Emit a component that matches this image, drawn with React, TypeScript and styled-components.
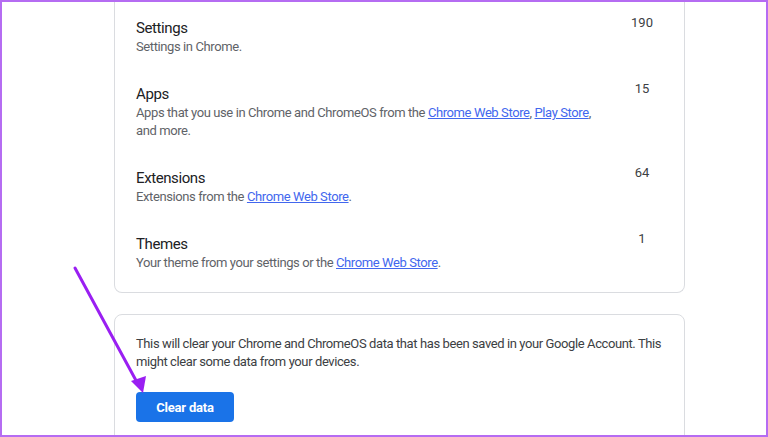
import React from 'react'
import styled, { createGlobalStyle } from 'styled-components'

const GlobalStyle = createGlobalStyle`
  html, body {
    margin: 0;
    padding: 0;
    background: #ffffff;
  }
  body {
    font-family: Roboto, "Liberation Sans", Arial, sans-serif;
  }
`

interface SyncItem {
  title: string;
  count: number;
  description: React.ReactNode;
}

const Frame = styled.div`
  position: relative;
  box-sizing: border-box;
  width: 768px;
  height: 437px;
  border: 2px solid #b56cf2;
  overflow: hidden;
  background: #ffffff;
  padding-left: 112px;
`

const Card = styled.section`
  box-sizing: border-box;
  width: 571px;
  border: 1px solid #dadce0;
  border-radius: 8px;
  background: #ffffff;
`

const ListCard = styled(Card)`
  border-top: 0;
  border-top-left-radius: 0;
  border-top-right-radius: 0;
  padding: 16px 12px 20px 21px;
  display: flex;
  flex-direction: column;
  gap: 28px;
`

const ClearCard = styled(Card)`
  margin-top: 21px;
  padding: 20px 12px 40px 21px;
`

const Row = styled.div`
  display: grid;
  grid-template-columns: 1fr 60px;
`

const Title = styled.div`
  font-size: 15px;
  line-height: 20px;
  letter-spacing: -0.4px;
  color: #202124;
`

const Description = styled.div`
  font-size: 13px;
  line-height: 18px;
  letter-spacing: -0.4px;
  color: #5f6368;
`

const Link = styled.a`
  color: #4267ee;
  text-decoration: underline;
  cursor: pointer;
`

const Count = styled.div`
  font-size: 13px;
  line-height: 18px;
  color: #3c4043;
  text-align: center;
  margin-top: -4px;
`

const Notice = styled.p`
  margin: 0;
  font-size: 13px;
  line-height: 18px;
  letter-spacing: -0.4px;
  color: #3c4043;
`

const ClearButton = styled.button`
  margin-top: 21px;
  width: 98px;
  height: 30px;
  border: 0;
  border-radius: 4px;
  background: #1a73e8;
  color: #ffffff;
  font-family: Roboto, "Liberation Sans", Arial, sans-serif;
  font-size: 13px;
  font-weight: 700;
  letter-spacing: -0.2px;
  cursor: pointer;
`

const Pointer = styled.svg`
  position: absolute;
  top: -2px;
  left: -2px;
  pointer-events: none;
`

const items: SyncItem[] = [
  { title: 'Settings', count: 190, description: 'Settings in Chrome.' },
  {
    title: 'Apps',
    count: 15,
    description: (
      <>
        Apps that you use in Chrome and ChromeOS from the <Link>Chrome Web Store</Link>,{' '}
        <Link>Play Store</Link>, and more.
      </>
    ),
  },
  {
    title: 'Extensions',
    count: 64,
    description: (
      <>
        Extensions from the <Link>Chrome Web Store</Link>.
      </>
    ),
  },
  {
    title: 'Themes',
    count: 1,
    description: (
      <>
        Your theme from your settings or the <Link>Chrome Web Store</Link>.
      </>
    ),
  },
]

export default function App() {
  return (
    <>
      <GlobalStyle />
      <Frame>
        <ListCard>
          {items.map(item => (
            <Row key={item.title}>
              <div>
                <Title>{item.title}</Title>
                <Description>{item.description}</Description>
              </div>
              <Count>{item.count}</Count>
            </Row>
          ))}
        </ListCard>
        <ClearCard>
          <Notice>
            This will clear your Chrome and ChromeOS data that has been saved in your Google Account. This
            might clear some data from your devices.
          </Notice>
          <ClearButton>Clear data</ClearButton>
        </ClearCard>
        <Pointer width="768" height="437" viewBox="0 0 768 437">
          <line x1="75" y1="268" x2="139" y2="386" stroke="#9a1ff2" strokeWidth="3" strokeLinecap="round" />
          <polygon points="143,393 131,381 146,376" fill="#9a1ff2" />
        </Pointer>
      </Frame>
    </>
  )
}
